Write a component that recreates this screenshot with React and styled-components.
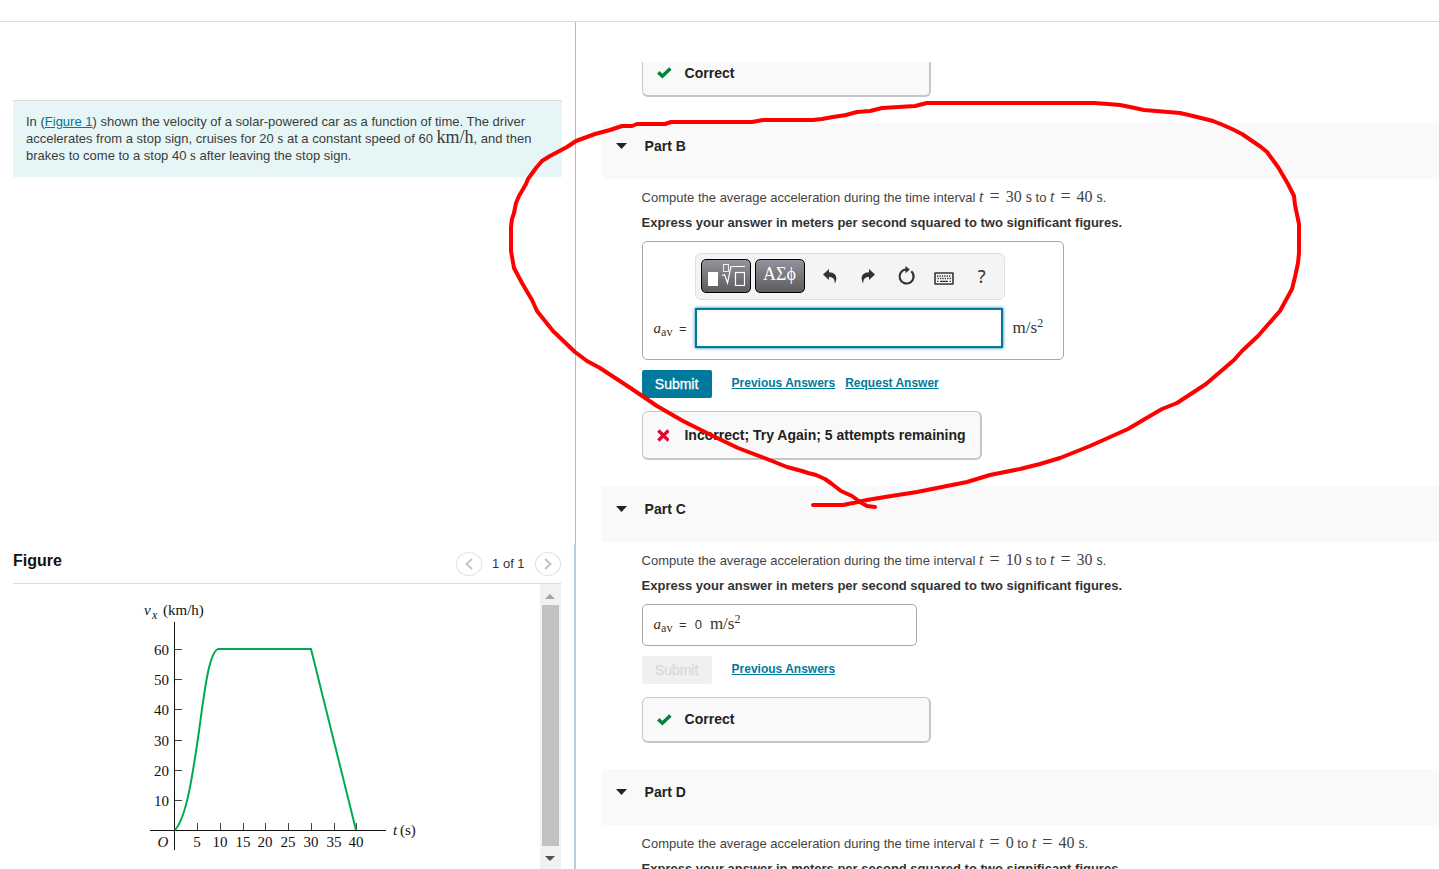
import React from 'react';
import styled, { createGlobalStyle } from 'styled-components';

const SANS = '"Liberation Sans", Arial, sans-serif';
const SERIF = '"Liberation Serif", "Times New Roman", serif';

const GlobalStyle = createGlobalStyle`
  * { box-sizing: border-box; }
  body {
    margin: 0;
    background: #fff;
    color: #333;
    font: 13px/17px ${SANS};
    overflow: hidden;
  }
  h2, p { margin: 0; }
  button { font-family: inherit; cursor: pointer; }
`;

const Page = styled.div`
  position: relative;
  display: flex;
  flex-direction: column;
  height: 100vh;
  overflow: hidden;
`;

const TopBar = styled.header`
  flex: 0 0 22px;
  border-bottom: 1px solid #dcdcdc;
`;

const Columns = styled.main`
  display: flex;
  flex: 1;
  min-height: 0;
`;

const LeftColumn = styled.section`
  display: flex;
  flex-direction: column;
  flex: 0 0 40%;
  min-width: 0;
`;

const ProblemPane = styled.div`
  flex: 1;
  min-height: 0;
  padding: 78px 13px 0;
  border-right: 1px solid #b4bccb;
`;

const ProblemText = styled.p`
  padding: 12px 12px 13px 13px;
  border-top: 1px solid #d9dddd;
  background: #e6f6f6;
  color: #3c3c3c;
`;

const Link = styled.a`
  color: #007a9c;
  font-weight: ${(p) => (p.$strong ? 'bold' : 'normal')};
  font-size: ${(p) => (p.$strong ? '12px' : 'inherit')};
  padding-bottom: ${(p) => (p.$strong ? '2px' : '0')};
  text-decoration: underline;
`;

const MathText = styled.span`
  font-family: ${SERIF};
  font-size: ${(p) => (p.$size || 16)}px;
  line-height: 12px;
  white-space: nowrap;
  sub, sup { font-size: 12px; line-height: 0; }
  sub { vertical-align: -3px; }
  sup { vertical-align: 6px; }
`;

const Relation = styled.span`
  margin: 0 2px;
  font-size: 18px;
`;

const LabelEquals = styled.span`
  margin-left: 3px;
`;

const FigurePane = styled.div`
  display: flex;
  flex-direction: column;
  flex: 0 0 325px;
  padding: 0 13px;
  border-right: 2px solid #b7cadf;
`;

const FigureHeader = styled.div`
  display: flex;
  justify-content: space-between;
  align-items: center;
  flex: 0 0 40px;
  border-bottom: 1px solid #dcdcdc;
`;

const FigureTitle = styled.h2`
  color: #111;
  font-size: 16px;
  line-height: 20px;
  padding-bottom: 6px;
`;

const Pager = styled.nav`
  display: flex;
  align-items: center;
  gap: 10px;
  font-size: 13px;
`;

const PagerButton = styled.button`
  display: flex;
  align-items: center;
  justify-content: center;
  width: 26px;
  height: 24px;
  padding: 0;
  border: 1px solid #e2e2e2;
  border-radius: 50%;
  background: #fff;
`;

const FigureBody = styled.div`
  display: flex;
  justify-content: space-between;
  flex: 1;
  min-height: 0;
`;

const Scrollbar = styled.div`
  display: flex;
  flex-direction: column;
  align-items: center;
  flex: 0 0 21px;
  background: #f1f1f1;
`;

const ScrollButton = styled.button`
  display: flex;
  align-items: center;
  justify-content: center;
  width: 21px;
  height: ${(p) => (p.$last ? 23 : 21)}px;
  padding: ${(p) => (p.$last ? '2px 0 0' : '3px 0 0')};
  border: 0;
  background: transparent;
`;

const ScrollThumb = styled.div`
  flex: 1;
  width: 17px;
  background: #c1c1c1;
`;

const ChartText = styled.text`
  font-family: ${SERIF};
  font-size: ${(p) => (p.$small ? 12 : 15)}px;
  font-style: ${(p) => (p.$italic ? 'italic' : 'normal')};
  text-anchor: ${(p) => p.$anchor || 'middle'};
  fill: #111;
`;

const RightColumn = styled.section`
  flex: 1;
  min-width: 0;
  margin-top: 40px;
  padding-left: 26px;
  overflow: hidden;
`;

const PartBody = styled.div`
  display: flex;
  flex-direction: column;
  align-items: flex-start;
  padding: ${(p) => (p.$first ? '0 0 26px 40px' : '10px 0 26px 40px')};
`;

const PartHeader = styled.div`
  display: flex;
  align-items: center;
  gap: 18px;
  height: 56px;
  padding: 0 14px 10px;
  background: #f9f9f9;
`;

const ToggleButton = styled.button`
  display: flex;
  padding: 0;
  border: 0;
  background: transparent;
`;

const PartTitle = styled.h2`
  color: #222;
  font-size: 14px;
  line-height: 17px;
`;

const Question = styled.p`
  margin-bottom: 8px;
  color: #444;
`;

const Instruction = styled.p`
  margin-bottom: 10px;
  font-weight: bold;
`;

const AnswerEditor = styled.div`
  display: grid;
  grid-template-columns: 41px 310px auto;
  row-gap: 8px;
  align-items: center;
  width: 422px;
  padding: 11px;
  border: 1px solid #a8a8a8;
  border-radius: 5px;
`;

const Toolbar = styled.div`
  grid-column: 2 / 4;
  display: flex;
  align-items: center;
  width: 310px;
  height: 47px;
  padding: 0 5px 2px;
  border: 1px solid #dedede;
  border-radius: 6px;
  background: #f4f4f4;
`;

const PaletteButton = styled.button`
  display: flex;
  align-items: center;
  justify-content: center;
  width: 50px;
  height: 34px;
  margin-right: 4px;
  padding: 0 0 2px;
  border: 1px solid #000;
  border-radius: 5px;
  background: linear-gradient(#94929d, #5c5c5c);
  color: #fff;
  && { font-family: ${SERIF}; }
  font-size: 18px;
`;

const ToolButton = styled.button`
  display: flex;
  align-items: center;
  justify-content: center;
  width: 38px;
  height: 34px;
  padding: 1px 0 0 4px;
  border: 0;
  background: transparent;
  color: #333;
  && { font-family: "Noto Sans", sans-serif; }
  font-size: 18px;
`;

const AnswerInput = styled.input`
  width: 308px;
  height: 40px;
  padding: 0 8px;
  border: 2px solid #007a9c;
  outline: 0;
  box-shadow: 0 0 3px #007a9c;
  font-size: 16px;
`;

const Unit = styled.span`
  padding-left: 8px;
`;

const AnswerReadout = styled.div`
  display: flex;
  align-items: center;
  gap: 8px;
  width: 275px;
  height: 42px;
  padding: 0 11px 2px;
  border: 1px solid #a8a8a8;
  border-radius: 5px;
`;

const Actions = styled.div`
  display: flex;
  align-items: center;
  gap: 10px;
  margin: 10px 0 13px;
`;

const SubmitButton = styled.button`
  width: 70px;
  height: 28px;
  margin-right: 10px;
  padding: 0;
  border: 0;
  border-radius: 2px;
  background: #007a9c;
  color: #fff;
  font-size: 14px;
  -webkit-text-stroke: 0.3px currentColor;
  &:disabled { background: #f0f0f0; color: #dadada; }
`;

const Feedback = styled.div`
  display: flex;
  align-items: center;
  gap: ${(p) => (p.$wrong ? 15 : 13)}px;
  width: ${(p) => (p.$wrong ? 340 : 289)}px;
  height: ${(p) => (p.$wrong ? 49 : 46)}px;
  padding: 0 14px;
  border: 1px solid #c6c6c6;
  border-right-width: 2px;
  border-bottom-width: 2px;
  border-radius: 6px;
  background: #f9f9f9;
  color: #222;
  font-size: 14px;
  font-weight: bold;
  white-space: nowrap;
  ${(p) => p.$cut && `
    height: 35px;
    padding-bottom: 11px;
    border-top: 0;
    border-radius: 0 0 6px 6px;
  `}
`;

const Marking = styled.svg`
  position: absolute;
  top: 0;
  left: 0;
  pointer-events: none;
`;

const Check = () => (
  <svg width="15" height="12" viewBox="0 0 15 12" aria-hidden="true">
    <path d="M1.3 5.4 L5.4 9.2 L13.4 1.5" fill="none" stroke="#00843d" strokeWidth="3.5" />
  </svg>
);

const Cross = () => (
  <svg width="15" height="15" viewBox="0 0 15 15" aria-hidden="true">
    <path d="M3 3 L12 12 M12 3 L3 12" fill="none" stroke="#dc0a32" strokeWidth="4" strokeLinecap="square" />
  </svg>
);

const Caret = ({ up, width = 10, height = 6, color = '#222' }) => (
  <svg width={width} height={height} viewBox="0 0 10 6" preserveAspectRatio="none" aria-hidden="true">
    <path d={up ? 'M0 6 L5 0 L10 6 Z' : 'M0 0 L10 0 L5 6 Z'} fill={color} />
  </svg>
);

const Chevron = ({ right }) => (
  <svg width="8" height="12" viewBox="0 0 8 12" aria-hidden="true">
    <path d={right ? 'M1 1 L6.5 6 L1 11' : 'M7 1 L1.5 6 L7 11'} fill="none" stroke="#c4c4c4" strokeWidth="2" />
  </svg>
);

const TemplateIcon = () => (
  <svg width="38" height="22" viewBox="0 0 38 22" fill="none" stroke="#fff" aria-hidden="true">
    <rect x="1" y="8" width="10" height="14" fill="#fff" stroke="none" />
    <rect x="16.5" y="0.5" width="5" height="7" strokeWidth="1" opacity="0.85" />
    <path d="M15 11.5 L17.5 10.5 L20.5 19 L24 2.5 H38" strokeWidth="1.2" />
    <rect x="28.5" y="8.5" width="9" height="13" strokeWidth="1.2" />
  </svg>
);

const ArrowIcon = ({ flip }) => (
  <svg width="14" height="15" viewBox="0 0 14 15" aria-hidden="true">
    <path
      transform={flip ? 'translate(14 0) scale(-1 1)' : undefined}
      d="M0 5.4 L6 0 V3.2 C11 3.2 13.8 6.3 13.3 10 C13.1 11.8 12.6 13.3 11.8 14.8 C11.9 10.5 10.3 8 6 8 V11 Z"
      fill="#333"
    />
  </svg>
);

const ResetIcon = () => (
  <svg width="18" height="20" viewBox="0 0 18 20" aria-hidden="true">
    <path d="M14.3 5.3 A7 7 0 1 1 9 3.5" fill="none" stroke="#333" strokeWidth="2.2" />
    <path d="M8.5 0 L12.8 3.6 L8.5 7.2 Z" fill="#333" />
  </svg>
);

const KeyboardIcon = () => (
  <svg width="20" height="17" viewBox="0 0 20 17" aria-hidden="true">
    <rect x="1" y="5" width="18" height="11" rx="0.5" fill="#fff" stroke="#333" strokeWidth="1.6" />
    <path d="M3 8 H17 M3.5 10.5 H17" stroke="#333" strokeWidth="1.3" strokeDasharray="1.4 1" />
    <path d="M3 13.3 H4.5 M6 13.3 H14 M15.5 13.3 H17" stroke="#333" strokeWidth="1.3" />
  </svg>
);

const Y_TICKS = [[60, 649], [50, 679], [40, 709], [30, 740], [20, 770], [10, 800]];
const X_TICKS = [[5, 197], [10, 220], [15, 243], [20, 265], [25, 288], [30, 311], [35, 334], [40, 356]];

const VelocityChart = () => (
  <svg width="500" height="285" viewBox="13 584 500 285" role="img" aria-label="Velocity as a function of time">
    <ChartText x="144" y="615" $anchor="start" $italic>v</ChartText>
    <ChartText x="152" y="619" $anchor="start" $italic $small>x</ChartText>
    <ChartText x="163" y="615" $anchor="start">(km/h)</ChartText>
    <path d="M174.5 622 V850 M150 830.5 H386" stroke="#111" fill="none" />
    {Y_TICKS.map(([label, y]) => (
      <g key={label}>
        <path d={`M175 ${y + 0.5} h7`} stroke="#444" />
        <ChartText x="169" y={y + 6} $anchor="end">{label}</ChartText>
      </g>
    ))}
    {X_TICKS.map(([label, x]) => (
      <g key={label}>
        <path d={`M${x + 0.5} 830 v-7`} stroke="#444" />
        <ChartText x={x} y="847">{label}</ChartText>
      </g>
    ))}
    <path
      d="M175 830 C186 818 192 780 199 731 C204 695 209 649 219 649 H311 L356 830"
      fill="none" stroke="#00ab4e" strokeWidth="2" strokeLinejoin="round"
    />
    <ChartText x="163" y="847" $italic>O</ChartText>
    <ChartText x="393" y="835" $anchor="start" $italic>t</ChartText>
    <ChartText x="400" y="835" $anchor="start">(s)</ChartText>
  </svg>
);

const MARK = [
  [875, 507], [867, 506], [860, 502], [852, 496], [841, 491], [832, 484], [825, 479], [816, 475], [808, 473],
  [802, 471], [787, 467], [767, 459], [738, 448], [713, 436], [683, 421], [657, 406], [632, 389], [600, 368],
  [587, 361], [575, 352], [553, 331], [537, 311], [532, 300], [522, 283], [514, 268], [511, 251], [511, 227],
  [512, 219], [514, 213], [516, 203], [519, 196], [526, 184], [528, 179], [536, 168], [542, 161], [550, 156],
  [567, 147], [576, 141], [595, 134], [610, 130], [622, 126], [632, 126], [637, 124], [665, 124], [671, 122],
  [752, 122], [763, 120], [813, 120], [822, 119], [833, 117], [846, 115], [857, 112], [870, 111], [882, 108],
  [915, 106], [927, 103], [1094, 103], [1108, 104], [1120, 105], [1130, 107], [1144, 110], [1180, 113],
  [1193, 116], [1213, 121], [1223, 125], [1232, 129], [1242, 134], [1261, 147], [1267, 152], [1278, 167],
  [1288, 184], [1294, 196], [1295, 205], [1299, 224], [1299, 253], [1298, 263], [1295, 277], [1292, 289],
  [1280, 311], [1258, 336], [1242, 351], [1234, 360], [1206, 384], [1177, 403], [1162, 409], [1150, 416],
  [1128, 429], [1090, 446], [1060, 458], [1040, 464], [1020, 469], [990, 475], [967, 482], [917, 492],
  [885, 497], [867, 500], [858, 502], [843, 505], [813, 505],
];

const Symbol = () => (
  <MathText $size={15}><i>a</i><sub>av</sub></MathText>
);

const Accel = () => (
  <MathText $size={17}>m/s<sup>2</sup></MathText>
);

const Time = ({ value, unit }) => (
  <MathText><i>t</i> <Relation>=</Relation> {value}{unit && ' s'}</MathText>
);

const Part = ({ name, from, to, fromUnit = true, children }) => (
  <article>
    <PartHeader>
      <ToggleButton aria-label={`Collapse ${name}`}><Caret width={11} /></ToggleButton>
      <PartTitle>{name}</PartTitle>
    </PartHeader>
    <PartBody>
      <Question>
        Compute the average acceleration during the time interval <Time value={from} unit={fromUnit} /> to{' '}
        <Time value={to} unit />.
      </Question>
      <Instruction>Express your answer in meters per second squared to two significant figures.</Instruction>
      {children}
    </PartBody>
  </article>
);

export default function App() {
  return (
    <Page>
      <GlobalStyle />
      <TopBar />
      <Columns>
        <LeftColumn>
          <ProblemPane>
            <ProblemText>
              In (<Link href="#figure">Figure 1</Link>) shown the velocity of a solar-powered car as a function of
              time. The driver accelerates from a stop sign, cruises for 20 <MathText $size={15}>s</MathText> at a
              constant speed of 60 <MathText $size={18}>km/h</MathText>, and then brakes to come to a stop
              40 <MathText $size={15}>s</MathText> after leaving the stop sign.
            </ProblemText>
          </ProblemPane>
          <FigurePane id="figure">
            <FigureHeader>
              <FigureTitle>Figure</FigureTitle>
              <Pager aria-label="Figures">
                <PagerButton aria-label="Previous figure"><Chevron /></PagerButton>
                <span>1 of 1</span>
                <PagerButton aria-label="Next figure"><Chevron right /></PagerButton>
              </Pager>
            </FigureHeader>
            <FigureBody>
              <VelocityChart />
              <Scrollbar>
                <ScrollButton aria-label="Scroll up"><Caret up height={5} color="#a3a3a3" /></ScrollButton>
                <ScrollThumb />
                <ScrollButton $last aria-label="Scroll down"><Caret height={5} color="#505050" /></ScrollButton>
              </Scrollbar>
            </FigureBody>
          </FigurePane>
        </LeftColumn>
        <RightColumn>
          <PartBody $first>
            <Feedback $cut><Check />Correct</Feedback>
          </PartBody>
          <Part name="Part B" from="30" to="40">
            <AnswerEditor>
              <Toolbar>
                <PaletteButton aria-label="Templates"><TemplateIcon /></PaletteButton>
                <PaletteButton>ΑΣϕ</PaletteButton>
                <ToolButton aria-label="Undo"><ArrowIcon /></ToolButton>
                <ToolButton aria-label="Redo"><ArrowIcon flip /></ToolButton>
                <ToolButton aria-label="Reset"><ResetIcon /></ToolButton>
                <ToolButton aria-label="Keyboard"><KeyboardIcon /></ToolButton>
                <ToolButton>?</ToolButton>
              </Toolbar>
              <label htmlFor="answer-b"><Symbol /> <LabelEquals>=</LabelEquals></label>
              <AnswerInput id="answer-b" type="text" />
              <Unit><Accel /></Unit>
            </AnswerEditor>
            <Actions>
              <SubmitButton>Submit</SubmitButton>
              <Link href="#previous" $strong>Previous Answers</Link>
              <Link href="#request" $strong>Request Answer</Link>
            </Actions>
            <Feedback $wrong><Cross />Incorrect; Try Again; 5 attempts remaining</Feedback>
          </Part>
          <Part name="Part C" from="10" to="30">
            <AnswerReadout>
              <span><Symbol /> <LabelEquals>=</LabelEquals></span>
              <span>0</span>
              <span><Accel /></span>
            </AnswerReadout>
            <Actions>
              <SubmitButton disabled>Submit</SubmitButton>
              <Link href="#previous" $strong>Previous Answers</Link>
            </Actions>
            <Feedback><Check />Correct</Feedback>
          </Part>
          <Part name="Part D" from="0" to="40" fromUnit={false} />
        </RightColumn>
      </Columns>
      <Marking width="1320" height="520" aria-hidden="true">
        <polyline
          points={MARK.map((p) => p.join(',')).join(' ')}
          fill="none" stroke="#ff0000" strokeWidth="4" strokeLinecap="round" strokeLinejoin="round"
        />
      </Marking>
    </Page>
  );
}
